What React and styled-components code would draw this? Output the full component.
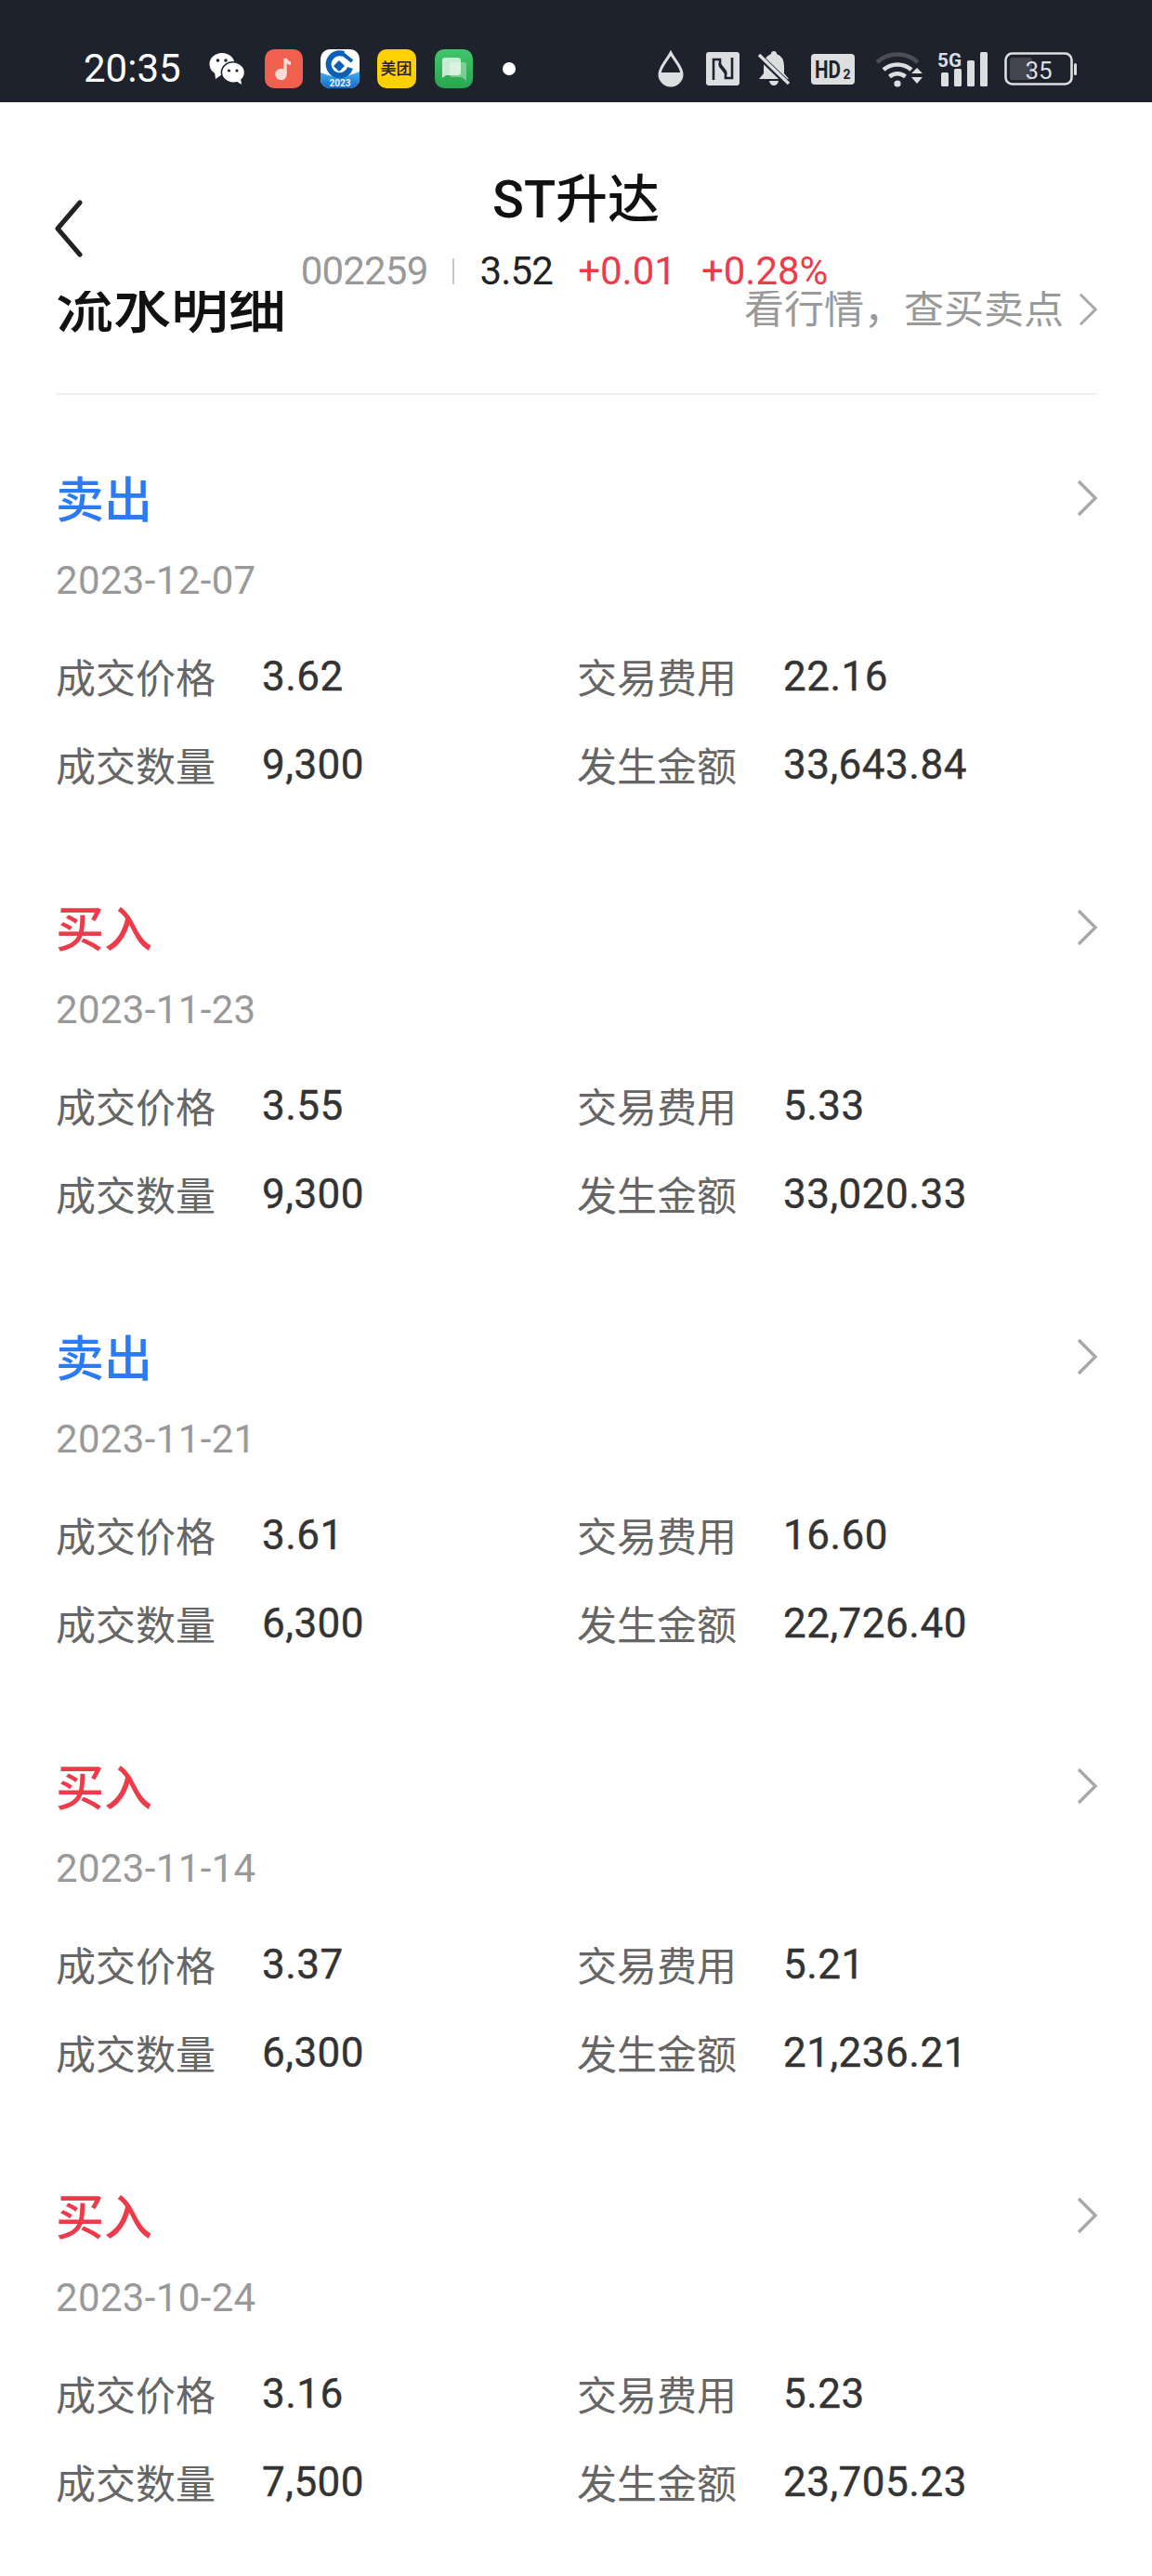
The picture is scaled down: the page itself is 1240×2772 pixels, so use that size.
import React from "react";
import styled, { createGlobalStyle } from "styled-components";

const trades = [
  { type: "卖出", date: "2023-12-07", price: "3.62", fee: "22.16", qty: "9,300", amount: "33,643.84" },
  { type: "买入", date: "2023-11-23", price: "3.55", fee: "5.33", qty: "9,300", amount: "33,020.33" },
  { type: "卖出", date: "2023-11-21", price: "3.61", fee: "16.60", qty: "6,300", amount: "22,726.40" },
  { type: "买入", date: "2023-11-14", price: "3.37", fee: "5.21", qty: "6,300", amount: "21,236.21" },
  { type: "买入", date: "2023-10-24", price: "3.16", fee: "5.23", qty: "7,500", amount: "23,705.23" },
];

const ICON = "#dddee0";
const DARK = "#1e222d";

function Chevron({ className }) {
  return (
    <svg className={className} viewBox="0 0 24 42" fill="none">
      <path d="M3 3 L21 21 L3 39" stroke="#a8a8a8" strokeWidth="3.4" strokeLinejoin="miter" />
    </svg>
  );
}

function Status() {
  return (
    <StatusBar>
      <StatusGroup>
        <Time>20:35</Time>
        <StatusIcon $left={30} width="39" height="36" viewBox="0 0 39 36">
          <ellipse cx="14" cy="13" rx="13.5" ry="12" fill="#fff" />
          <path d="M6 21 L7 29 L14 24Z" fill="#fff" />
          <ellipse cx="26" cy="22" rx="12.6" ry="11.2" fill="#fff" stroke={DARK} strokeWidth="1.6" />
          <path d="M29 31 L35 35 L34 28Z" fill="#fff" />
          <circle cx="9.5" cy="9" r="1.8" fill={DARK} />
          <circle cx="18" cy="9" r="1.8" fill={DARK} />
          <circle cx="21.5" cy="20" r="1.6" fill={DARK} />
          <circle cx="30" cy="20" r="1.6" fill={DARK} />
        </StatusIcon>
        <StatusIcon $left={21} width="41" height="42" viewBox="0 0 41 42">
          <rect width="41" height="42" rx="10" fill="#f0604f" />
          <path d="M22 10 L22 26 M22 10 Q24 15 28 15" stroke="#fbdcd8" strokeWidth="3.4" fill="none" />
          <circle cx="17.5" cy="27" r="6.2" fill="#fbdcd8" />
        </StatusIcon>
        <StatusIcon $left={19} width="42" height="42" viewBox="0 0 42 42">
          <defs>
            <linearGradient id="ccb" x1="0" y1="0" x2="0" y2="1">
              <stop offset="0" stopColor="#45b0ee" />
              <stop offset="1" stopColor="#1268c8" />
            </linearGradient>
            <clipPath id="ccbClip">
              <rect width="42" height="42" rx="10" />
            </clipPath>
          </defs>
          <g clipPath="url(#ccbClip)">
            <rect width="42" height="42" fill="#fff" />
            <path d="M0 25 Q20 34 42 24 V42 H0Z" fill="url(#ccb)" />
            <path d="M25 5 A12 12 0 1 0 32 20" stroke="#0b5fb4" strokeWidth="6" fill="none" />
            <path d="M24 5 L34 13" stroke="#0b5fb4" strokeWidth="4" />
            <path d="M20 12 L26 18 L20 24 L14 18Z" fill="#0b5fb4" />
            <text x="21" y="40" fontSize="10" fontWeight="700" fontFamily="Roboto" textAnchor="middle" fill="#e6f3ff">
              2023
            </text>
          </g>
        </StatusIcon>
        <MeituanTile>美团</MeituanTile>
        <StatusIcon $left={20} width="41" height="42" viewBox="0 0 41 42">
          <defs>
            <linearGradient id="msg" x1="0" y1="0" x2="0" y2="1">
              <stop offset="0" stopColor="#42c56c" />
              <stop offset="1" stopColor="#2aa650" />
            </linearGradient>
          </defs>
          <rect width="41" height="42" rx="10" fill="url(#msg)" />
          <path d="M8 12 Q8 9 11 9 H25 Q28 9 28 12 V25 Q28 28 25 28 H12 L8 31Z" fill="#fff" opacity="0.72" />
          <path d="M16 17 Q16 14 19 14 H31 Q34 14 34 17 V34 L29 30 H19 Q16 30 16 27Z" fill="#fff" opacity="0.35" />
        </StatusIcon>
        <Dot />
      </StatusGroup>
      <StatusGroup>
        <StatusIcon width="28" height="40" viewBox="0 0 28 40">
          <path d="M14 3 C10 11 2 18 2 26 A12 12 0 0 0 26 26 C26 18 18 11 14 3Z" fill="none" stroke={ICON} strokeWidth="3" />
          <path d="M2 24 H26 V26 A12 12 0 0 1 2 26Z" fill={ICON} />
        </StatusIcon>
        <StatusIcon $left={24} width="36" height="36" viewBox="0 0 36 36">
          <rect width="36" height="36" rx="3" fill={ICON} />
          <path d="M8 30 V8 H15 V15 L22 24" stroke={DARK} strokeWidth="2.6" fill="none" />
          <path d="M28 6 V28 H21 V21 L14 12" stroke={DARK} strokeWidth="2.6" fill="none" />
        </StatusIcon>
        <StatusIcon $left={20} width="35" height="40" viewBox="0 0 35 40">
          <path d="M17 1 Q20 1 20 4 Q28 7 28 17 V25 L33 31 H1 L6 25 V17 Q6 7 14 4 Q14 1 17 1Z" fill={ICON} />
          <path d="M12 33 H22 Q21 38 17 38 Q13 38 12 33Z" fill={ICON} />
          <path d="M1 6 L33 37" stroke={DARK} strokeWidth="6.5" />
          <path d="M1 5 L33 36" stroke={ICON} strokeWidth="3.4" />
        </StatusIcon>
        <StatusIcon $left={22} width="47" height="33" viewBox="0 0 47 33">
          <rect width="47" height="33" rx="4" fill={ICON} />
          <text x="4" y="26" fontSize="26" fontWeight="700" fontFamily="Roboto" fill={DARK} textLength="28" lengthAdjust="spacingAndGlyphs">
            HD
          </text>
          <text x="34.5" y="27" fontSize="14" fontWeight="700" fontFamily="Roboto" fill={DARK}>
            2
          </text>
        </StatusIcon>
        <StatusIcon $left={22} width="51" height="40" viewBox="0 0 51 40" fill="none">
          <path d="M2 13 A33 33 0 0 1 46 13" stroke="#4b4e58" strokeWidth="4.5" />
          <path d="M9 21 A23 23 0 0 1 39 21" stroke={ICON} strokeWidth="4.5" />
          <path d="M15.5 28.5 A13 13 0 0 1 32.5 28.5" stroke={ICON} strokeWidth="4.5" />
          <circle cx="24" cy="36" r="3.6" fill={ICON} />
          <path d="M39 25 L45 19 L51 25Z M39 29 L51 29 L45 36Z" fill={ICON} />
        </StatusIcon>
        <StatusIcon $left={16} width="54" height="38" viewBox="0 0 54 38">
          <text x="0" y="17" fontSize="20" fontWeight="700" fontFamily="Roboto" fill={ICON} textLength="26" lengthAdjust="spacingAndGlyphs">
            5G
          </text>
          <rect x="4" y="23" width="8" height="15" rx="1.5" fill={ICON} />
          <rect x="18" y="19" width="8" height="19" rx="1.5" fill={ICON} />
          <rect x="32" y="10" width="8" height="28" rx="1.5" fill={ICON} />
          <rect x="46" y="1" width="8" height="37" rx="1.5" fill={ICON} />
        </StatusIcon>
        <StatusIcon $left={18} width="78" height="36" viewBox="0 0 78 36">
          <rect x="1.5" y="1.5" width="71" height="33" rx="7" fill="none" stroke={ICON} strokeWidth="2.6" />
          <rect x="6" y="6" width="24" height="24" rx="3" fill="#43464f" />
          <rect x="75" y="12" width="3" height="13" rx="1.5" fill={ICON} />
          <text x="37" y="28.5" fontSize="26" fontFamily="Roboto" textAnchor="middle" fill={ICON}>
            35
          </text>
        </StatusIcon>
      </StatusGroup>
    </StatusBar>
  );
}

export default function App() {
  return (
    <>
      <GlobalStyle />
      <Page>
        <Status />
        <Scroller>
          <StockHeader>
            <BackIcon viewBox="0 0 32 62" fill="none">
              <path d="M28 3 L4 31 L28 59" stroke="#222" strokeWidth="5" strokeLinecap="round" strokeLinejoin="round" />
            </BackIcon>
            <Title>ST升达</Title>
            <Quote>
              <Code>002259</Code>
              <QuoteDivider />
              <Price>3.52</Price>
              <Change>+0.01</Change>
              <Change>+0.28%</Change>
            </Quote>
          </StockHeader>
          <SectionHead>
            <SectionTitle>流水明细</SectionTitle>
            <SectionLink>
              看行情，查买卖点
              <LinkChevron />
            </SectionLink>
          </SectionHead>
          <TradeList>
            {trades.map((trade) => (
              <Trade key={trade.date}>
                <TradeTop>
                  <TradeType $sell={trade.type === "卖出"}>{trade.type}</TradeType>
                  <TradeChevron />
                </TradeTop>
                <TradeDate>{trade.date}</TradeDate>
                <TradeGrid>
                  <Field>
                    <FieldLabel>成交价格</FieldLabel>
                    <FieldValue>{trade.price}</FieldValue>
                  </Field>
                  <Field>
                    <FieldLabel>交易费用</FieldLabel>
                    <FieldValue>{trade.fee}</FieldValue>
                  </Field>
                  <Field>
                    <FieldLabel>成交数量</FieldLabel>
                    <FieldValue>{trade.qty}</FieldValue>
                  </Field>
                  <Field>
                    <FieldLabel>发生金额</FieldLabel>
                    <FieldValue>{trade.amount}</FieldValue>
                  </Field>
                </TradeGrid>
              </Trade>
            ))}
          </TradeList>
        </Scroller>
      </Page>
    </>
  );
}

const GlobalStyle = createGlobalStyle`
  html, body {
    margin: 0;
    padding: 0;
    background: #fff;
  }

  body {
    font-family: Roboto, "Noto Sans CJK SC", sans-serif;
  }
`;

const Page = styled.div`
  width: 1240px;
  height: 2772px;
  display: flex;
  flex-direction: column;
  overflow: hidden;
  background: #fff;
`;

const StatusBar = styled.div`
  height: 110px;
  flex: none;
  box-sizing: border-box;
  padding: 54px 81px 0 90px;
  display: flex;
  justify-content: space-between;
  align-items: flex-start;
  background: #1e222d;
`;

const StatusGroup = styled.div`
  height: 40px;
  display: flex;
  align-items: center;
`;

const Time = styled.span`
  font-size: 42px;
  line-height: 40px;
  color: #fff;
`;

const StatusIcon = styled.svg`
  flex: none;
  overflow: visible;
  margin-left: ${(props) => props.$left || 0}px;
`;

const MeituanTile = styled.div`
  width: 42px;
  height: 42px;
  margin-left: 19px;
  flex: none;
  border-radius: 10px;
  background: #ffd100;
  color: #222;
  font-size: 17px;
  font-weight: 500;
  line-height: 42px;
  text-align: center;
  white-space: nowrap;
`;

const Dot = styled.div`
  width: 14px;
  height: 14px;
  margin-left: 32px;
  flex: none;
  border-radius: 50%;
  background: #fff;
`;

const Scroller = styled.div`
  position: relative;
  flex: 1;
  overflow: hidden;
`;

const StockHeader = styled.header`
  position: absolute;
  top: 0;
  left: 0;
  right: 0;
  height: 203px;
  box-sizing: border-box;
  padding-top: 69px;
  background: #fff;
  text-align: center;
`;

const BackIcon = styled.svg`
  position: absolute;
  left: 58px;
  top: 105px;
  width: 32px;
  height: 62px;
`;

const Title = styled.h1`
  margin: 0;
  font-size: 56px;
  font-weight: 500;
  line-height: 72px;
  color: #111;
`;

const Quote = styled.div`
  margin-top: 21px;
  padding-right: 25px;
  display: flex;
  justify-content: center;
  align-items: center;
  gap: 27px;
  font-size: 42px;
  line-height: 40px;
`;

const Code = styled.span`
  color: #999;
  letter-spacing: -0.8px;
`;

const QuoteDivider = styled.i`
  width: 2px;
  height: 28px;
  background: #c4c4c4;
`;

const Price = styled.span`
  color: #222;
  letter-spacing: -0.8px;
`;

const Change = styled.span`
  color: #ee3b49;
`;

const SectionHead = styled.div`
  margin: 0 58px 0 60px;
  padding: 179px 0 48px;
  display: flex;
  justify-content: space-between;
  align-items: center;
  border-bottom: 2px solid #f1f1f1;
`;

const SectionTitle = styled.h2`
  margin: 0;
  font-size: 62px;
  font-weight: 500;
  line-height: 86px;
  color: #111;
`;

const SectionLink = styled.div`
  display: flex;
  align-items: center;
  gap: 15px;
  padding-top: 2px;
  font-size: 43px;
  line-height: 60px;
  color: #999;
`;

const LinkChevron = styled(Chevron)`
  width: 22px;
  height: 38px;
`;

const TradeList = styled.div`
  margin: 0 58px 0 60px;
  padding-top: 85px;
`;

const Trade = styled.section`
  padding-bottom: 102px;
`;

const TradeTop = styled.div`
  display: flex;
  justify-content: space-between;
  align-items: flex-start;
`;

const TradeType = styled.span`
  font-size: 52px;
  font-weight: 500;
  line-height: 60px;
  color: ${(props) => (props.$sell ? "#2b7bf6" : "#ee3b49")};
`;

const TradeChevron = styled(Chevron)`
  width: 24px;
  height: 42px;
  margin-top: 5px;
`;

const TradeDate = styled.div`
  margin-top: 25px;
  font-size: 42px;
  line-height: 60px;
  letter-spacing: 0.35px;
  color: #999;
`;

const TradeGrid = styled.div`
  margin-top: 25px;
  display: grid;
  grid-template-columns: 561px 1fr;
`;

const Field = styled.div`
  display: flex;
  align-items: center;
  height: 95px;
`;

const FieldLabel = styled.span`
  width: 222px;
  flex: none;
  padding-bottom: 2px;
  font-size: 43px;
  color: #666;
`;

const FieldValue = styled.span`
  font-size: 44px;
  letter-spacing: 0.5px;
  -webkit-text-stroke: 0.4px #333;
  color: #333;
`;
